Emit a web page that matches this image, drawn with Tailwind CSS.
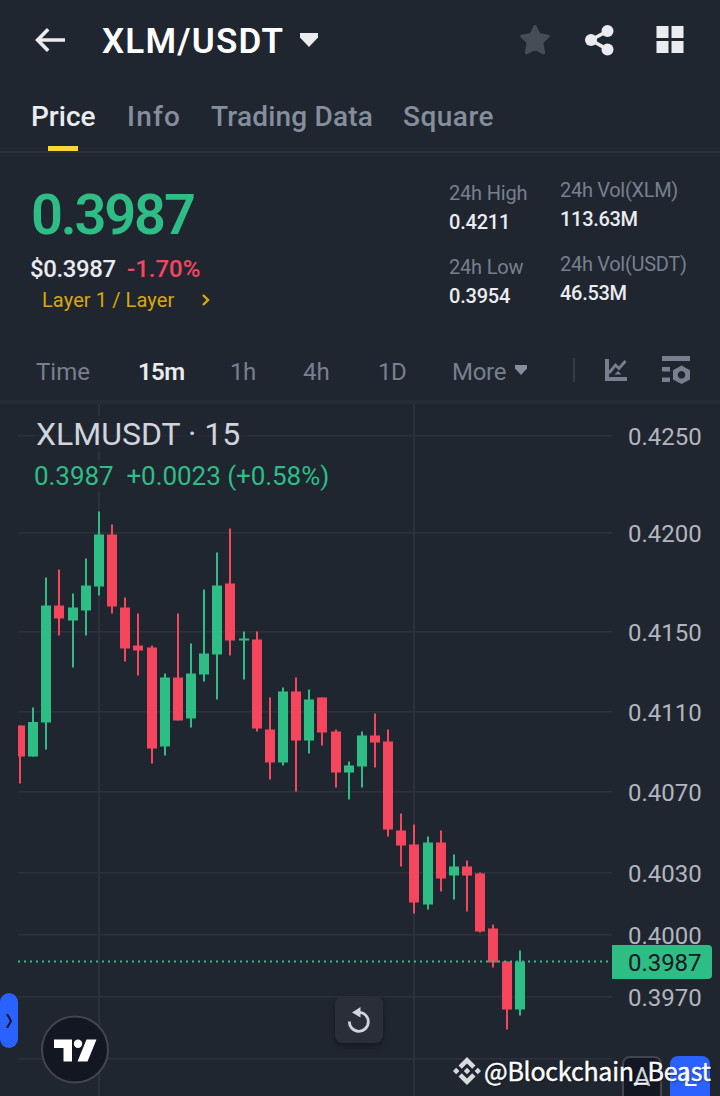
<!DOCTYPE html>
<html lang="en">
<head>
    <meta charset="UTF-8">
    <meta name="viewport" content="width=device-width, initial-scale=1.0">
    <title>XLM/USDT</title>
    <script src="https://cdn.jsdelivr.net/npm/@tailwindcss/browser@4"></script>
</head>
<body class="bg-[#202630]">
    <div class="w-[720px] h-[1096px] overflow-hidden flex flex-col bg-[#202630] font-[Roboto,sans-serif] text-[#eaecef] whitespace-nowrap">
        <!-- Header -->
        <header class="h-20 shrink-0 flex items-center pl-[35px] pr-9">
            <svg class="w-[30px] h-6" viewBox="0 0 30 24" fill="none" stroke="#eaecef" stroke-width="3.6">
                <path d="M30 12H3M13.200 1.300L2.600 12L13.200 22.700" />
            </svg>
            <h1 class="ml-[37px] mt-[3px] w-[185px] text-[35px] leading-none font-semibold tracking-[1.200px] text-white">XLM/USDT</h1>
            <svg class="ml-[13px] w-[18px] h-[14px]" viewBox="0 0 18 14" fill="#eaecef"><path d="M0 0h18v4.500L9 14L0 4.500z" /></svg>
            <div class="ml-auto flex items-center">
                <svg class="w-[30px] h-[31px]" viewBox="0 0 30 31" fill="#474d57" stroke="#474d57" stroke-width="3" stroke-linejoin="round">
                    <path d="M15 1.500L18.800 9.500L28.300 11.200L21.900 17.500L23.600 27.800L15 23.500L6.400 27.800L8.100 17.500L1.700 11.200L11.200 9.500z" />
                </svg>
                <svg class="ml-[35px] w-[29px] h-[31px]" viewBox="0 0 29 31" fill="#eaecef">
                    <path d="M22.500 6L6 15L22.500 24.500" fill="none" stroke="#eaecef" stroke-width="3.600" />
                    <circle cx="22.500" cy="6" r="6" /><circle cx="6" cy="15" r="6" /><circle cx="22.500" cy="24.500" r="6" />
                </svg>
                <svg class="ml-[42px] w-7 h-7" viewBox="0 0 28 28" fill="#eaecef">
                    <path d="M.5 0h12v12H.5zM15.500 0h12v12h-12zM.5 15h12v12H.5zM15.500 15h12v12h-12z" />
                </svg>
            </div>
        </header>

        <!-- Tabs -->
        <nav class="h-[73px] shrink-0 flex border-b-2 border-[#2b313c] pl-[31px] pt-[21px] text-[28px] leading-8 font-medium text-[#848e9c]">
            <div class="w-24 flex flex-col text-[#eaecef]">
                <span>Price</span>
                <span class="mt-[13px] ml-[17px] w-[30px] h-[6px] bg-[#fcd535]"></span>
            </div>
            <span class="w-[84px] tracking-[1.200px]">Info</span>
            <span class="w-[192px] tracking-[0.200px]">Trading Data</span>
            <span class="tracking-[0.500px]">Square</span>
        </nav>

        <!-- Price summary -->
        <section class="h-[187px] shrink-0 flex pl-[31px]">
            <div class="w-[418px] pt-8">
                <div class="text-[56px] leading-[60px] font-semibold tracking-[-2.200px] text-[#2ebd85]">0.3987</div>
                <div class="mt-[10px] flex text-[24px] leading-7 font-medium">
                    <span class="w-24 tracking-[-0.400px] -ml-px mr-px">$0.3987</span>
                    <span class="text-[#f6465d]">-1.70%</span>
                </div>
                <div class="mt-[3px] ml-[11px] flex items-center text-[20px] leading-7 tracking-[0.100px] text-[#d9a80b]">
                    <span class="w-[160px]">Layer 1 / Layer</span>
                    <svg class="w-2 h-3" viewBox="0 0 8 12" fill="none" stroke="#d9a80b" stroke-width="2.400"><path d="M1 1l5 5l-5 5" /></svg>
                </div>
            </div>
            <div class="w-[111px] pt-[26px] text-[20px] leading-7 tracking-[-0.200px]">
                <div class="text-[#76808f]">24h High</div>
                <div class="font-medium mt-[1px]">0.4211</div>
                <div class="mt-[17px] text-[#76808f]">24h Low</div>
                <div class="font-medium mt-[1px]">0.3954</div>
            </div>
            <div class="pt-[23px] text-[20px] leading-7 tracking-[-0.300px]">
                <div class="text-[#76808f]">24h Vol(XLM)</div>
                <div class="font-medium mt-[1px]">113.63M</div>
                <div class="mt-[17px] text-[#76808f]">24h Vol(USDT)</div>
                <div class="font-medium mt-[1px]">46.53M</div>
            </div>
        </section>

        <!-- Intervals -->
        <nav class="h-[64px] shrink-0 flex items-center border-b-4 border-[#262c37] pl-9 text-[24px] leading-8 text-[#76808f]">
            <span class="mt-[3px] w-[102px]">Time</span>
            <span class="mt-[3px] w-[92px] font-semibold tracking-[-0.600px] text-[#eaecef]">15m</span>
            <span class="mt-[3px] w-[73px] tracking-[-0.500px]">1h</span>
            <span class="mt-[3px] w-[75px]">4h</span>
            <span class="mt-[3px] w-[74px] tracking-[-0.500px]">1D</span>
            <span class="mt-[3px] w-[63px] tracking-[-0.300px]">More</span>
            <svg class="w-3 h-[10px]" viewBox="0 0 12 10" fill="#848e9c"><path d="M0 0h12v3.500L6 10L0 3.500z" /></svg>
            <span class="ml-[46px] w-[2px] h-6 bg-[#333b47]"></span>
            <svg class="ml-[30px] w-[22px] h-[23px]" viewBox="0 0 22 23" fill="none" stroke="#76808f">
                <path d="M2 0V20H22" stroke-width="4" />
                <path d="M4 14L10.500 6L14 9.500L20.500 2" stroke-width="2.800" />
                <path d="M9.500 15.500L13 12L16.500 15.500z" fill="#76808f" stroke="none" />
            </svg>
            <svg class="ml-[35px] w-7 h-7" viewBox="0 0 28 28" fill="#76808f">
                <path d="M0 0h28v5H0zM0 11h8v4.500H0zM0 21.500h8v4.500H0z" />
                <path fill-rule="evenodd" d="M19.500 9.500L28 14.200V23.400L19.500 28L11 23.400V14.200zM19.500 15a3.800 3.800 0 1 0 .01 0z" />
            </svg>
        </nav>

        <!-- Chart -->
        <main class="relative flex-1">
            <svg id="chart" class="block w-[720px] h-[692px]" viewBox="0 404 720 692">
                <g id="grid" class="fill-[#2c323c]"></g>
                <g id="candles"></g>
                <path d="M18 961.500H610" stroke="#2ebd85" stroke-width="2" stroke-dasharray="2 4" />
                <g id="prices" class="fill-[#b2b5be] text-[24px]"></g>
                <path d="M612 945h96a4 4 0 0 1 4 4v26a4 4 0 0 1-4 4h-96z" fill="#2ebd85" />
                <text x="628" y="971" class="fill-[#131722] text-[24px] tracking-[-0.050px]">0.3987</text>
                <!-- TradingView logo -->
                <circle cx="75" cy="1049.500" r="33" fill="#131722" stroke="#434651" stroke-width="2" />
                <path d="M54 1039.500h18v22h-8.500v-13.500H54zM86.500 1039.500h10l-9 22h-10z" fill="#fff" />
                <circle cx="78" cy="1043.700" r="4.200" fill="#fff" />
            </svg>

            <div class="absolute left-[34px] top-[12px] bg-[#202630]/70 pr-2 pl-[2px] text-[32px] leading-9 text-[#d1d4dc]">XLMUSDT · 15</div>
            <div class="absolute left-[34px] top-[56px] bg-[#202630]/70 text-[26px] leading-8 tracking-[-0.050px] text-[#2ebd85]">0.3987&nbsp; +0.0023 (+0.58%)</div>

            <div class="absolute left-0 top-[589px] w-[18px] h-[55px] rounded-[9px] bg-[#2962ff] flex items-center justify-center">
                <svg class="w-[6px] h-[14px]" viewBox="0 0 6 14" fill="none" stroke="#131722" stroke-width="2"><path d="M1 0l4 7l-4 7" /></svg>
            </div>

            <div class="absolute left-[335px] top-[592px] w-12 h-[47px] rounded-lg bg-[#2a2e39] shadow-[0_3px_6px_rgba(0,0,0,0.400)] flex items-center justify-center">
                <svg class="w-6 h-7" viewBox="0 0 24 28" fill="none" stroke="#d1d4dc" stroke-width="2.800">
                    <path d="M2.300 15.500a9.500 9.500 0 1 0 9.500-9.200" />
                    <path d="M5 6.500L13.500 1V11.500z" fill="#d1d4dc" stroke="none" />
                </svg>
            </div>

            <div class="absolute left-[622px] top-[652px] w-10 h-12 rounded-lg border-2 border-[#434651] bg-[#131722] pt-[3px] text-center text-[26px] leading-8 text-[#d1d4dc]">A</div>
            <div class="absolute left-[670px] top-[652px] w-10 h-12 rounded-lg bg-[#2962ff] pt-[5px] text-center text-[26px] leading-8 text-white">L</div>

            <div class="absolute left-[453px] top-[650px] flex items-center text-white [text-shadow:1px_1px_2px_rgba(0,0,0,0.500)]">
                <svg class="w-7 h-7" viewBox="0 0 28 28" fill="#d9dadd">
                    <path d="M14 0l8.500 8.500l-3.300 3.300L14 6.600l-5.200 5.200l-3.300-3.300zM14 28l8.500-8.500l-3.300-3.300L14 21.400l-5.200-5.200l-3.300 3.300zM14 10.800l3.200 3.200l-3.200 3.200l-3.200-3.200zM3.200 10.800L6.400 14l-3.200 3.200L0 14zM24.800 10.800L28 14l-3.200 3.200L21.600 14z" />
                </svg>
                <span class="-mt-[2px] ml-[3px] font-['Noto_Sans_CJK_SC',sans-serif] text-[25px] leading-9 tracking-[-0.250px] [-webkit-text-stroke:0.400px_white]">@Blockchain_Beast</span>
            </div>
        </main>
    </div>
    <script>
        const svgNS = 'http://www.w3.org/2000/svg';
        const grid = document.getElementById('grid');
        const candles = document.getElementById('candles');
        const prices = document.getElementById('prices');

        // center x, high, body top, body bottom, low, direction
        const data = [
            [20, 725, 725, 757, 784, 'r'], [33, 707, 721.5, 757, 757, 'g'], [46, 577, 605, 723, 750, 'g'],
            [59, 569, 605, 619, 636, 'r'], [73, 593, 607, 621, 668, 'g'], [86, 558, 585, 611, 636, 'g'],
            [99, 511, 534, 587, 596, 'g'], [112, 524, 534, 607, 614, 'r'], [125, 597, 607, 649, 662, 'r'],
            [138, 613, 645, 651, 676, 'r'], [152, 645, 647, 749, 764, 'r'], [165, 673, 677, 747, 756, 'g'],
            [178, 613, 677, 721, 721, 'r'], [191, 643, 673, 719, 728, 'g'], [204, 589, 653, 675, 682, 'g'],
            [217, 552, 585, 655, 700, 'g'], [230, 528, 583, 641, 656, 'r'], [244, 631, 638, 641, 680, 'g'],
            [257, 631, 639, 729, 732, 'r'], [270, 697, 729, 763, 780, 'r'], [283, 687, 691, 763, 766, 'g'],
            [296, 677, 691, 741, 792, 'r'], [309, 689, 699, 741, 754, 'g'], [322, 697, 697, 733, 746, 'r'],
            [336, 729, 731, 773, 788, 'r'], [349, 761, 765, 773, 800, 'g'], [362, 731, 735, 767, 788, 'g'],
            [375, 713, 735, 743, 768, 'r'], [388, 729, 741, 830, 837, 'r'], [401, 813, 830, 846, 867, 'r'],
            [414, 824, 844, 903, 914, 'r'], [428, 836, 842, 905, 910, 'g'], [441, 830, 842, 879, 892, 'r'],
            [454, 854, 866, 876, 900, 'g'], [467, 860, 866, 876, 912, 'r'], [480, 872, 873, 932, 933, 'r'],
            [493, 924, 928, 963, 968, 'r'], [507, 961, 961, 1010, 1030, 'r'], [520, 950, 961, 1010, 1016, 'g']
        ];
        const levels = [
            [435, '0.4250'], [532, '0.4200'], [631, '0.4150'], [711, '0.4110'], [791, '0.4070'],
            [872, '0.4030'], [934, '0.4000'], [996, '0.3970'], [1058, '']
        ];

        function rect(parent, x, y, width, height, fill) {
            const el = document.createElementNS(svgNS, 'rect');
            el.setAttribute('x', x);
            el.setAttribute('y', y);
            el.setAttribute('width', width);
            el.setAttribute('height', height);
            if (fill) el.setAttribute('fill', fill);
            parent.appendChild(el);
        }

        for (const [y, label] of levels) {
            rect(grid, 18, y, 594, 1.5);
            const text = document.createElementNS(svgNS, 'text');
            text.setAttribute('x', 628);
            text.setAttribute('y', y + 10);
            text.textContent = label;
            prices.appendChild(text);
        }
        rect(grid, 98, 404, 2, 692);
        rect(grid, 413, 404, 2, 692);

        for (const [x, high, top, bottom, low, dir] of data) {
            const color = dir === 'g' ? '#2ebd85' : '#f6465d';
            const left = Math.max(18, x - 5); // first candle is clipped by the pane edge
            rect(candles, x - 1, high + 0.5, 2, low - high - 1, color);
            rect(candles, left, top + 0.5, x + 5 - left, bottom - top - 1, color);
        }
    </script>
</body>
</html>
